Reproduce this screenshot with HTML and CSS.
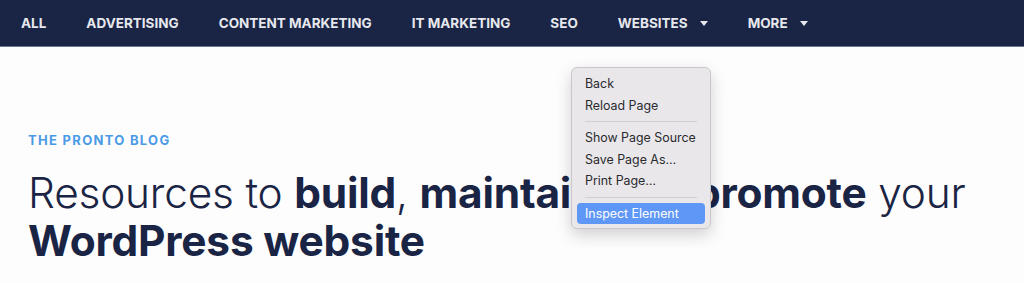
FILE: index.html
```html
<!DOCTYPE html>
<html>
<head>
<meta charset="utf-8">
<link rel="stylesheet" href="styles.css">
</head>
<body>
<nav class="nav">
  <a class="nav-item">ALL</a>
  <a class="nav-item">ADVERTISING</a>
  <a class="nav-item">CONTENT MARKETING</a>
  <a class="nav-item">IT MARKETING</a>
  <a class="nav-item">SEO</a>
  <a class="nav-item">WEBSITES <span class="caret"></span></a>
  <a class="nav-item">MORE <span class="caret"></span></a>
</nav>
<main class="hero">
  <div class="eyebrow">THE PRONTO BLOG</div>
  <h1 class="title">Resources to <b>build</b>, <b>maintain</b> and <b>promote</b> your <b>WordPress website</b></h1>
</main>
<div class="menu">
  <div class="menu-item">Back</div>
  <div class="menu-item">Reload Page</div>
  <div class="sep"></div>
  <div class="menu-item">Show Page Source</div>
  <div class="menu-item">Save Page As…</div>
  <div class="menu-item">Print Page…</div>
  <div class="sep"></div>
  <div class="menu-item active">Inspect Element</div>
</div>
</body>
</html>
```
FILE: styles.css
```css
* { box-sizing: border-box; }
html, body { margin: 0; padding: 0; }
body {
  width: 1024px;
  height: 283px;
  overflow: hidden;
  background: #fdfdfd;
  font-family: Inter, "Noto Sans", sans-serif;
  position: relative;
}
.nav {
  height: 47px;
  background: #1a2444;
  display: flex;
  align-items: center;
  padding-left: 1px;
  border-bottom: 1px solid #6b7590;
}
.nav-item {
  color: #e6e8ee;
  font-size: 13.5px;
  font-weight: 700;
  padding: 0 20px;
  display: flex;
  align-items: center;
  white-space: nowrap;
}
.caret {
  display: inline-block;
  width: 0; height: 0;
  border-left: 4px solid transparent;
  border-right: 4px solid transparent;
  border-top: 5px solid #e6e8ee;
  margin-left: 12px;
}
.hero {
  padding: 85px 0 0 28px;
}
.eyebrow {
  color: #4b9ae6;
  font-size: 13px;
  font-weight: 700;
  letter-spacing: 1.3px;
}
.title {
  margin: 21px 0 0 0;
  font-size: 42.4px;
  line-height: 48px;
  font-weight: 300;
  color: #1a2444;
  letter-spacing: -0.2px;
  width: 980px;
}
.title b { font-weight: 700; }
.menu {
  position: absolute;
  left: 571px;
  top: 67px;
  width: 140px;
  height: 162px;
  background: #e9e7ea;
  border: 1px solid #c9c7cb;
  border-radius: 6px;
  box-shadow: 0 6px 16px rgba(0,0,0,0.18);
  padding: 5px 5px;
  font-family: Inter, "Noto Sans", sans-serif;
  font-size: 12.4px;
  color: #2a2a2e;
}
.menu-item {
  height: 21.5px;
  line-height: 21.5px;
  padding-left: 8px;
  border-radius: 4px;
}
.sep {
  height: 1px;
  background: #d2d0d4;
  margin: 5px 8px 5px 8px;
}
.menu-item.active {
  background: #5f97f7;
  color: #fff;
  margin-top: 1px;
}
```
